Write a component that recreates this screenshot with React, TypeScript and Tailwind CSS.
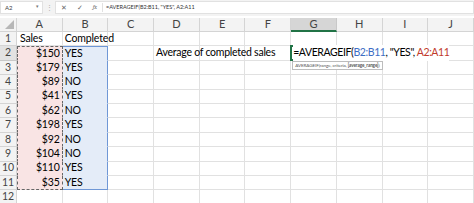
import React from 'react';

const COLS = ['A', 'B', 'C', 'D', 'E', 'F', 'G', 'H', 'I', 'J'];
const SALES = ['$150', '$179', '$89', '$41', '$62', '$198', '$92', '$104', '$110', '$35'];
const DONE = ['YES', 'YES', 'NO', 'YES', 'NO', 'YES', 'NO', 'NO', 'YES', 'YES'];

function FormulaBar() {
  return (
    <div className="flex h-[16px] items-center bg-[#f3f3f3] pb-[2px] text-[#444]">
      <div className="flex h-[13px] w-[43px] items-center justify-between border border-[#e1e1e1] bg-white pl-[4px] pr-[3px] text-[6px]">
        <span>A2</span>
        <span className="text-[5px] text-[#777]">▾</span>
      </div>
      <div className="flex w-[12px] justify-center text-[7px] text-[#aaa]">⋮</div>
      <div className="flex h-[13px] flex-1 items-center border border-[#e1e1e1] bg-white">
        <div className="flex w-[46px] items-center justify-around text-[7px] text-[#666]">
          <span>✕</span>
          <span>✓</span>
          <span className="font-serif text-[6px] italic">fx</span>
        </div>
        <div className="h-[9px] w-px bg-[#e1e1e1]" />
        <span className="pl-[3px] text-[5.5px] text-[#333]">=AVERAGEIF(B2:B11, "YES", A2:A11</span>
      </div>
    </div>
  );
}

function Cell({ col, row }: { col: number; row: number }) {
  const base =
    'relative border-r border-b border-[#e1e1e1] flex items-center text-[10.5px] tracking-[-0.15px] text-black whitespace-nowrap';
  if (col === 0 && row === 1) return <div className={`${base} pl-[3px]`}>Sales</div>;
  if (col === 1 && row === 1) return <div className={`${base} pl-[2px]`}>Completed</div>;
  if (col === 0 && row >= 2 && row <= 11) {
    return (
      <div
        className={`${base} justify-end border-dashed border-l border-l-[#666] border-r-[#666] bg-[#f9e4e4] pr-[2px] ${row === 2 ? 'border-t border-t-[#666]' : ''} ${row === 11 ? 'border-b-[#666]' : 'border-b-[#f9e4e4]'}`}
      >
        {SALES[row - 2]}
      </div>
    );
  }
  if (col === 1 && row >= 2 && row <= 11) {
    return (
      <div
        className={`${base} border-r-[#6f97d6] bg-[#e4ecf8] pl-[2px] ${row === 11 ? 'border-b-[#6f97d6]' : 'border-b-[#e4ecf8]'} ${row === 2 ? 'border-t border-t-[#6f97d6]' : ''}`}
      >
        {DONE[row - 2]}
      </div>
    );
  }
  if (col === 3 && row === 2) {
    return (
      <div className={base}>
        <span className="absolute left-[2px] z-10 tracking-[-0.25px]">Average of completed sales</span>
      </div>
    );
  }
  if (col === 6 && row === 2) {
    return (
      <div className={base}>
        <div className="absolute inset-[-1px] border-2 border-[#217346]" />
        <span className="absolute left-[2px] z-10 bg-white text-[10.5px] tracking-[-0.4px]">
          =AVERAGEIF(<span className="text-[#3d6ec4]">B2:B11</span>, "YES", <span className="text-[#c0392b]">A2:A11</span>
        </span>
        <div className="absolute left-[1px] top-[15px] z-20 border border-[#bdbdbd] bg-white px-[2px] text-[4.6px] leading-[7px] tracking-[-0.1px] text-[#555]">
          AVERAGEIF(range, criteria, <span className="font-bold">[average_range]</span>)
        </div>
      </div>
    );
  }
  return <div className={base} />;
}

export default function App() {
  const rows = Array.from({ length: 12 }, (_, i) => i + 1);
  return (
    <div className="h-[203px] w-[474px] overflow-hidden bg-white font-['Lato',sans-serif]">
      <FormulaBar />
      <div className="mt-[2px] grid grid-cols-[17px_repeat(10,45.7px)] grid-rows-[14px_repeat(12,14.4px)]">
        <div className="relative border-r border-b border-[#d4d4d4] bg-[#f3f3f3]">
          <div className="absolute bottom-[2px] right-[2px] h-0 w-0 border-b-[9px] border-l-[9px] border-b-[#b7b7b7] border-l-transparent" />
        </div>
        {COLS.map((c) => (
          <div
            key={c}
            className={`flex items-center justify-center border-r border-b text-[11px] text-[#444] ${c === 'G' ? 'border-b-2 border-b-[#217346] border-r-[#c8c8c8] bg-[#d6d6d6]' : 'border-[#d4d4d4] bg-[#f3f3f3]'}`}
          >
            {c}
          </div>
        ))}
        {rows.map((r) => (
          <React.Fragment key={r}>
            <div
              className={`flex items-center justify-center border-r border-b text-[10.5px] text-[#444] ${r === 2 ? 'border-[#c8c8c8] bg-[#e2e2e2]' : 'border-[#d4d4d4] bg-[#f3f3f3]'}`}
            >
              {r}
            </div>
            {COLS.map((c, ci) => (
              <Cell key={c} col={ci} row={r} />
            ))}
          </React.Fragment>
        ))}
      </div>
    </div>
  );
}
